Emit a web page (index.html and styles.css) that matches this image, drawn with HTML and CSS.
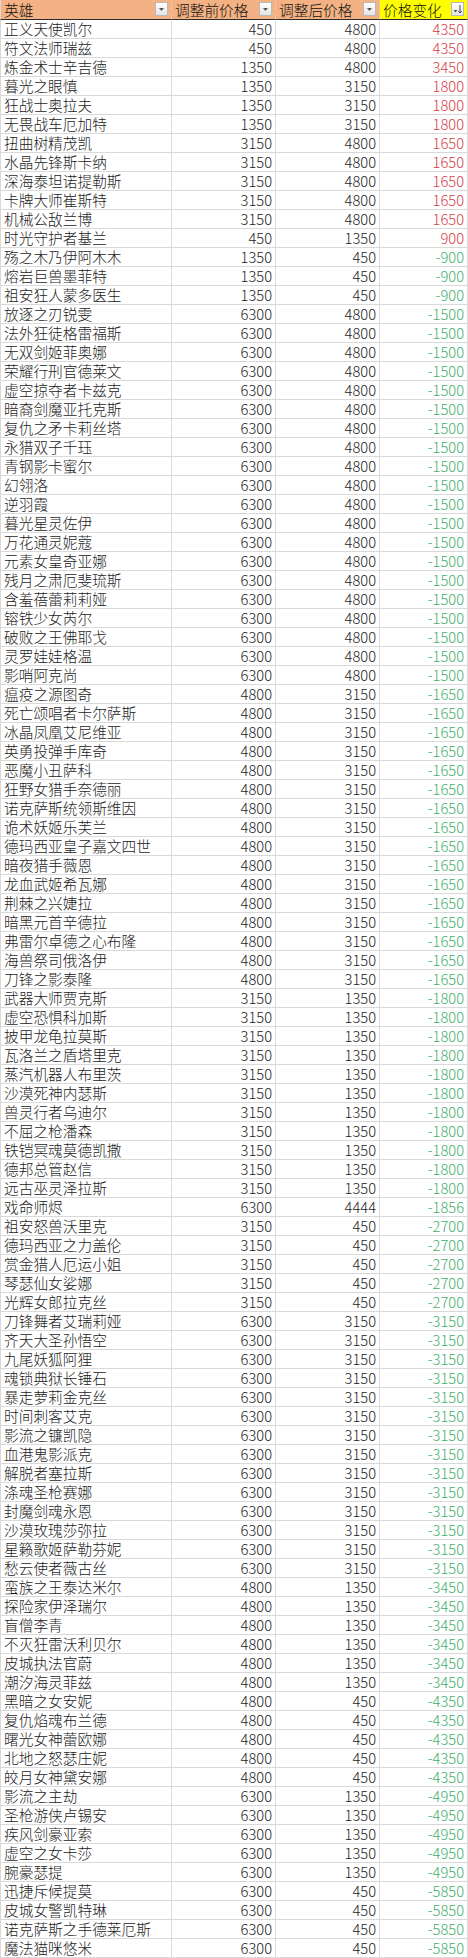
FILE: index.html
```html
<!DOCTYPE html>
<html lang="zh-CN">
<head>
<meta charset="utf-8">
<title>英雄价格调整</title>
<link rel="stylesheet" href="styles.css">
</head>
<body>
<div class="sheet">
  <div class="row head">
    <span class="h orange">英雄<i class="fb"><svg viewBox="0 0 11 12"><path d="M3 5h5l-2.5 3z" fill="#555"/></svg></i></span>
    <span class="h orange">调整前价格<i class="fb"><svg viewBox="0 0 11 12"><path d="M3 5h5l-2.5 3z" fill="#555"/></svg></i></span>
    <span class="h orange">调整后价格<i class="fb"><svg viewBox="0 0 11 12"><path d="M3 5h5l-2.5 3z" fill="#555"/></svg></i></span>
    <span class="h yellow">价格变化<i class="fb"><svg viewBox="0 0 11 12"><path d="M1.5 7h4l-2 2.5z" fill="#555"/><path d="M8 2v8M6.3 8.2 8 10l1.7-1.8" stroke="#444" stroke-width="1" fill="none"/></svg></i></span>
  </div>
  <div class="row"><span>正义天使凯尔</span><span>450</span><span>4800</span><span class="up">4350</span></div>
  <div class="row"><span>符文法师瑞兹</span><span>450</span><span>4800</span><span class="up">4350</span></div>
  <div class="row"><span>炼金术士辛吉德</span><span>1350</span><span>4800</span><span class="up">3450</span></div>
  <div class="row"><span>暮光之眼慎</span><span>1350</span><span>3150</span><span class="up">1800</span></div>
  <div class="row"><span>狂战士奥拉夫</span><span>1350</span><span>3150</span><span class="up">1800</span></div>
  <div class="row"><span>无畏战车厄加特</span><span>1350</span><span>3150</span><span class="up">1800</span></div>
  <div class="row"><span>扭曲树精茂凯</span><span>3150</span><span>4800</span><span class="up">1650</span></div>
  <div class="row"><span>水晶先锋斯卡纳</span><span>3150</span><span>4800</span><span class="up">1650</span></div>
  <div class="row"><span>深海泰坦诺提勒斯</span><span>3150</span><span>4800</span><span class="up">1650</span></div>
  <div class="row"><span>卡牌大师崔斯特</span><span>3150</span><span>4800</span><span class="up">1650</span></div>
  <div class="row"><span>机械公敌兰博</span><span>3150</span><span>4800</span><span class="up">1650</span></div>
  <div class="row"><span>时光守护者基兰</span><span>450</span><span>1350</span><span class="up">900</span></div>
  <div class="row"><span>殇之木乃伊阿木木</span><span>1350</span><span>450</span><span class="down">-900</span></div>
  <div class="row"><span>熔岩巨兽墨菲特</span><span>1350</span><span>450</span><span class="down">-900</span></div>
  <div class="row"><span>祖安狂人蒙多医生</span><span>1350</span><span>450</span><span class="down">-900</span></div>
  <div class="row"><span>放逐之刃锐雯</span><span>6300</span><span>4800</span><span class="down">-1500</span></div>
  <div class="row"><span>法外狂徒格雷福斯</span><span>6300</span><span>4800</span><span class="down">-1500</span></div>
  <div class="row"><span>无双剑姬菲奥娜</span><span>6300</span><span>4800</span><span class="down">-1500</span></div>
  <div class="row"><span>荣耀行刑官德莱文</span><span>6300</span><span>4800</span><span class="down">-1500</span></div>
  <div class="row"><span>虚空掠夺者卡兹克</span><span>6300</span><span>4800</span><span class="down">-1500</span></div>
  <div class="row"><span>暗裔剑魔亚托克斯</span><span>6300</span><span>4800</span><span class="down">-1500</span></div>
  <div class="row"><span>复仇之矛卡莉丝塔</span><span>6300</span><span>4800</span><span class="down">-1500</span></div>
  <div class="row"><span>永猎双子千珏</span><span>6300</span><span>4800</span><span class="down">-1500</span></div>
  <div class="row"><span>青钢影卡蜜尔</span><span>6300</span><span>4800</span><span class="down">-1500</span></div>
  <div class="row"><span>幻翎洛</span><span>6300</span><span>4800</span><span class="down">-1500</span></div>
  <div class="row"><span>逆羽霞</span><span>6300</span><span>4800</span><span class="down">-1500</span></div>
  <div class="row"><span>暮光星灵佐伊</span><span>6300</span><span>4800</span><span class="down">-1500</span></div>
  <div class="row"><span>万花通灵妮蔻</span><span>6300</span><span>4800</span><span class="down">-1500</span></div>
  <div class="row"><span>元素女皇奇亚娜</span><span>6300</span><span>4800</span><span class="down">-1500</span></div>
  <div class="row"><span>残月之肃厄斐琉斯</span><span>6300</span><span>4800</span><span class="down">-1500</span></div>
  <div class="row"><span>含羞蓓蕾莉莉娅</span><span>6300</span><span>4800</span><span class="down">-1500</span></div>
  <div class="row"><span>镕铁少女芮尔</span><span>6300</span><span>4800</span><span class="down">-1500</span></div>
  <div class="row"><span>破败之王佛耶戈</span><span>6300</span><span>4800</span><span class="down">-1500</span></div>
  <div class="row"><span>灵罗娃娃格温</span><span>6300</span><span>4800</span><span class="down">-1500</span></div>
  <div class="row"><span>影哨阿克尚</span><span>6300</span><span>4800</span><span class="down">-1500</span></div>
  <div class="row"><span>瘟疫之源图奇</span><span>4800</span><span>3150</span><span class="down">-1650</span></div>
  <div class="row"><span>死亡颂唱者卡尔萨斯</span><span>4800</span><span>3150</span><span class="down">-1650</span></div>
  <div class="row"><span>冰晶凤凰艾尼维亚</span><span>4800</span><span>3150</span><span class="down">-1650</span></div>
  <div class="row"><span>英勇投弹手库奇</span><span>4800</span><span>3150</span><span class="down">-1650</span></div>
  <div class="row"><span>恶魔小丑萨科</span><span>4800</span><span>3150</span><span class="down">-1650</span></div>
  <div class="row"><span>狂野女猎手奈德丽</span><span>4800</span><span>3150</span><span class="down">-1650</span></div>
  <div class="row"><span>诺克萨斯统领斯维因</span><span>4800</span><span>3150</span><span class="down">-1650</span></div>
  <div class="row"><span>诡术妖姬乐芙兰</span><span>4800</span><span>3150</span><span class="down">-1650</span></div>
  <div class="row"><span>德玛西亚皇子嘉文四世</span><span>4800</span><span>3150</span><span class="down">-1650</span></div>
  <div class="row"><span>暗夜猎手薇恩</span><span>4800</span><span>3150</span><span class="down">-1650</span></div>
  <div class="row"><span>龙血武姬希瓦娜</span><span>4800</span><span>3150</span><span class="down">-1650</span></div>
  <div class="row"><span>荆棘之兴婕拉</span><span>4800</span><span>3150</span><span class="down">-1650</span></div>
  <div class="row"><span>暗黑元首辛德拉</span><span>4800</span><span>3150</span><span class="down">-1650</span></div>
  <div class="row"><span>弗雷尔卓德之心布隆</span><span>4800</span><span>3150</span><span class="down">-1650</span></div>
  <div class="row"><span>海兽祭司俄洛伊</span><span>4800</span><span>3150</span><span class="down">-1650</span></div>
  <div class="row"><span>刀锋之影泰隆</span><span>4800</span><span>3150</span><span class="down">-1650</span></div>
  <div class="row"><span>武器大师贾克斯</span><span>3150</span><span>1350</span><span class="down">-1800</span></div>
  <div class="row"><span>虚空恐惧科加斯</span><span>3150</span><span>1350</span><span class="down">-1800</span></div>
  <div class="row"><span>披甲龙龟拉莫斯</span><span>3150</span><span>1350</span><span class="down">-1800</span></div>
  <div class="row"><span>瓦洛兰之盾塔里克</span><span>3150</span><span>1350</span><span class="down">-1800</span></div>
  <div class="row"><span>蒸汽机器人布里茨</span><span>3150</span><span>1350</span><span class="down">-1800</span></div>
  <div class="row"><span>沙漠死神内瑟斯</span><span>3150</span><span>1350</span><span class="down">-1800</span></div>
  <div class="row"><span>兽灵行者乌迪尔</span><span>3150</span><span>1350</span><span class="down">-1800</span></div>
  <div class="row"><span>不屈之枪潘森</span><span>3150</span><span>1350</span><span class="down">-1800</span></div>
  <div class="row"><span>铁铠冥魂莫德凯撒</span><span>3150</span><span>1350</span><span class="down">-1800</span></div>
  <div class="row"><span>德邦总管赵信</span><span>3150</span><span>1350</span><span class="down">-1800</span></div>
  <div class="row"><span>远古巫灵泽拉斯</span><span>3150</span><span>1350</span><span class="down">-1800</span></div>
  <div class="row"><span>戏命师烬</span><span>6300</span><span>4444</span><span class="down">-1856</span></div>
  <div class="row"><span>祖安怒兽沃里克</span><span>3150</span><span>450</span><span class="down">-2700</span></div>
  <div class="row"><span>德玛西亚之力盖伦</span><span>3150</span><span>450</span><span class="down">-2700</span></div>
  <div class="row"><span>赏金猎人厄运小姐</span><span>3150</span><span>450</span><span class="down">-2700</span></div>
  <div class="row"><span>琴瑟仙女娑娜</span><span>3150</span><span>450</span><span class="down">-2700</span></div>
  <div class="row"><span>光辉女郎拉克丝</span><span>3150</span><span>450</span><span class="down">-2700</span></div>
  <div class="row"><span>刀锋舞者艾瑞莉娅</span><span>6300</span><span>3150</span><span class="down">-3150</span></div>
  <div class="row"><span>齐天大圣孙悟空</span><span>6300</span><span>3150</span><span class="down">-3150</span></div>
  <div class="row"><span>九尾妖狐阿狸</span><span>6300</span><span>3150</span><span class="down">-3150</span></div>
  <div class="row"><span>魂锁典狱长锤石</span><span>6300</span><span>3150</span><span class="down">-3150</span></div>
  <div class="row"><span>暴走萝莉金克丝</span><span>6300</span><span>3150</span><span class="down">-3150</span></div>
  <div class="row"><span>时间刺客艾克</span><span>6300</span><span>3150</span><span class="down">-3150</span></div>
  <div class="row"><span>影流之镰凯隐</span><span>6300</span><span>3150</span><span class="down">-3150</span></div>
  <div class="row"><span>血港鬼影派克</span><span>6300</span><span>3150</span><span class="down">-3150</span></div>
  <div class="row"><span>解脱者塞拉斯</span><span>6300</span><span>3150</span><span class="down">-3150</span></div>
  <div class="row"><span>涤魂圣枪赛娜</span><span>6300</span><span>3150</span><span class="down">-3150</span></div>
  <div class="row"><span>封魔剑魂永恩</span><span>6300</span><span>3150</span><span class="down">-3150</span></div>
  <div class="row"><span>沙漠玫瑰莎弥拉</span><span>6300</span><span>3150</span><span class="down">-3150</span></div>
  <div class="row"><span>星籁歌姬萨勒芬妮</span><span>6300</span><span>3150</span><span class="down">-3150</span></div>
  <div class="row"><span>愁云使者薇古丝</span><span>6300</span><span>3150</span><span class="down">-3150</span></div>
  <div class="row"><span>蛮族之王泰达米尔</span><span>4800</span><span>1350</span><span class="down">-3450</span></div>
  <div class="row"><span>探险家伊泽瑞尔</span><span>4800</span><span>1350</span><span class="down">-3450</span></div>
  <div class="row"><span>盲僧李青</span><span>4800</span><span>1350</span><span class="down">-3450</span></div>
  <div class="row"><span>不灭狂雷沃利贝尔</span><span>4800</span><span>1350</span><span class="down">-3450</span></div>
  <div class="row"><span>皮城执法官蔚</span><span>4800</span><span>1350</span><span class="down">-3450</span></div>
  <div class="row"><span>潮汐海灵菲兹</span><span>4800</span><span>1350</span><span class="down">-3450</span></div>
  <div class="row"><span>黑暗之女安妮</span><span>4800</span><span>450</span><span class="down">-4350</span></div>
  <div class="row"><span>复仇焰魂布兰德</span><span>4800</span><span>450</span><span class="down">-4350</span></div>
  <div class="row"><span>曙光女神蕾欧娜</span><span>4800</span><span>450</span><span class="down">-4350</span></div>
  <div class="row"><span>北地之怒瑟庄妮</span><span>4800</span><span>450</span><span class="down">-4350</span></div>
  <div class="row"><span>皎月女神黛安娜</span><span>4800</span><span>450</span><span class="down">-4350</span></div>
  <div class="row"><span>影流之主劫</span><span>6300</span><span>1350</span><span class="down">-4950</span></div>
  <div class="row"><span>圣枪游侠卢锡安</span><span>6300</span><span>1350</span><span class="down">-4950</span></div>
  <div class="row"><span>疾风剑豪亚索</span><span>6300</span><span>1350</span><span class="down">-4950</span></div>
  <div class="row"><span>虚空之女卡莎</span><span>6300</span><span>1350</span><span class="down">-4950</span></div>
  <div class="row"><span>腕豪瑟提</span><span>6300</span><span>1350</span><span class="down">-4950</span></div>
  <div class="row"><span>迅捷斥候提莫</span><span>6300</span><span>450</span><span class="down">-5850</span></div>
  <div class="row"><span>皮城女警凯特琳</span><span>6300</span><span>450</span><span class="down">-5850</span></div>
  <div class="row"><span>诺克萨斯之手德莱厄斯</span><span>6300</span><span>450</span><span class="down">-5850</span></div>
  <div class="row"><span>魔法猫咪悠米</span><span>6300</span><span>450</span><span class="down">-5850</span></div>
</div>
</body>
</html>
```

FILE: styles.css
```css
html, body {
  margin: 0;
  padding: 0;
  background: #ffffff;
}

.sheet {
  width: 468px;
  font-family: "Noto Sans CJK SC", "Noto Sans", sans-serif;
  font-size: 14.7px;
  font-weight: 300;
  color: #1b1b1b;
}

.row {
  display: grid;
  grid-template-columns: 172px 104px 104px 88px;
  height: 19px;
}

.row > span {
  box-sizing: border-box;
  height: 19px;
  line-height: 18px;
  border-right: 1px solid #d9d9d9;
  border-bottom: 1px solid #d9d9d9;
  padding: 0 3px;
  white-space: nowrap;
  text-align: right;
}

.row > span:first-child {
  text-align: left;
  border-left: 1px solid #d9d9d9;
  padding-left: 3px;
}

.row .up {
  color: #d63c44;
}

.row .down {
  color: #3fae6c;
}

.row.head {
  height: 20px;
}

.row.head > span.h {
  height: 20px;
  line-height: 19px;
  display: flex;
  align-items: center;
  justify-content: space-between;
  text-align: left;
  padding: 0 3px 0 3px;
  border-bottom: 1px solid #2a2a2a;
  border-right: 1px solid #e6c2a6;
  color: #111;
}

.row.head > span.h:first-child {
  border-left: 1px solid #d9d9d9;
}

.orange {
  background: #f4b183;
}

.yellow {
  background: #ffff00;
}

.fb {
  display: block;
  flex: none;
  box-sizing: border-box;
  width: 13px;
  height: 14px;
  margin-top: -1px;
  border: 1px solid #b9b9b9;
  background: linear-gradient(#ffffff, #e4e4e4);
}

.fb svg {
  display: block;
  width: 11px;
  height: 12px;
}
```
